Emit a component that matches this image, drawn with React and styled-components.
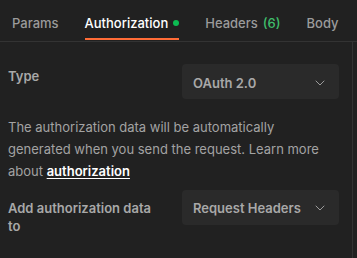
import React from "react"
import styled, { createGlobalStyle } from "styled-components"
import { ChevronDown } from "lucide-react"

const Global = createGlobalStyle`
  body {
    margin: 0;
    background: #212121;
    font-family: Inter, "Noto Sans", sans-serif;
  }
`

const Page = styled.div`
  width: 357px;
  height: 258px;
  background: #212121;
  display: flex;
  flex-direction: column;
  overflow: hidden;
`

const TabBar = styled.div`
  height: 41px;
  display: flex;
  gap: 26px;
  padding-left: 12px;
  border-bottom: 1px solid #333333;
`

const Tab = styled.div`
  position: relative;
  display: flex;
  align-items: center;
  gap: 5px;
  font-size: 13px;
  font-weight: 500;
  color: ${(p) => (p.$active ? "#ffffff" : "#9b9b9b")};
  padding-top: 4px;
  white-space: nowrap;

  ${(p) =>
    p.$active &&
    `
    &::after {
      content: "";
      position: absolute;
      left: 0;
      right: 0;
      bottom: 1px;
      height: 2px;
      background: #ff6c37;
    }
  `}
`

const Count = styled.span`
  color: #3fbe6b;
`

const Dot = styled.span`
  width: 6px;
  height: 6px;
  border-radius: 50%;
  background: #0cbb52;
`

const Panel = styled.div`
  flex: 1;
  width: 353px;
  box-sizing: border-box;
  padding: 0 13px 0 8px;
  border-right: 1px solid #333333;
`

const Row = styled.div`
  display: flex;
  justify-content: space-between;
  align-items: flex-start;
  margin-top: ${(p) => p.$top}px;
`

const Label = styled.div`
  width: 150px;
  padding-top: ${(p) => p.$pad}px;
  font-size: 13px;
  font-weight: 600;
  line-height: 18px;
  color: #a8a8a8;
`

const Select = styled.div`
  width: 157px;
  height: 35px;
  box-sizing: border-box;
  padding: ${(p) => p.$shift || 0}px 11px 0;
  border-radius: 4px;
  background: #2a2a2a;
  display: flex;
  align-items: center;
  justify-content: space-between;
  font-size: 13px;
  font-weight: 600;
  color: #a8a8a8;
`

const Note = styled.p`
  margin: 17px 0 0;
  font-size: 13px;
  line-height: 22px;
  color: #a3a3a3;
`

const Link = styled.a`
  color: #ffffff;
  font-weight: 600;
  text-decoration: underline;
  text-underline-offset: 2px;
`

export default function App() {
  return (
    <Page>
      <Global />
      <TabBar>
        <Tab>Params</Tab>
        <Tab $active>
          Authorization
          <Dot />
        </Tab>
        <Tab>
          Headers <Count>(6)</Count>
        </Tab>
        <Tab>Body</Tab>
      </TabBar>
      <Panel>
        <Row $top={22}>
          <Label $pad={3}>Type</Label>
          <Select $shift={2}>
            OAuth 2.0
            <ChevronDown size={16} strokeWidth={1.5} color="#9b9b9b" />
          </Select>
        </Row>
        <Note>
          The authorization data will be automatically generated when you send
          the request. Learn more about <Link>authorization</Link>
        </Note>
        <Row $top={8}>
          <Label $pad={9}>Add authorization data to</Label>
          <Select>
            Request Headers
            <ChevronDown size={16} strokeWidth={1.5} color="#9b9b9b" />
          </Select>
        </Row>
      </Panel>
    </Page>
  )
}
